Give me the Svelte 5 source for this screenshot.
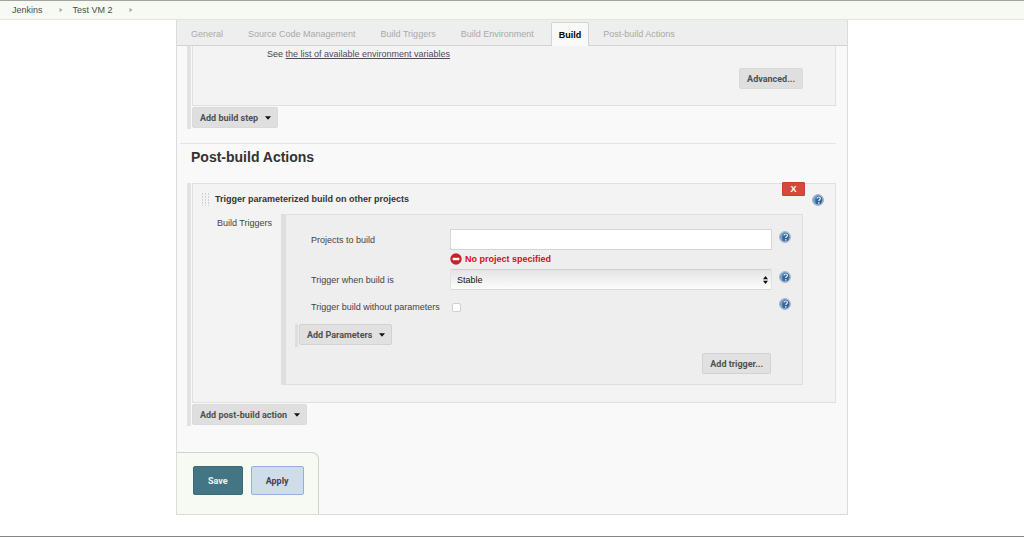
<script>
	let active = 'Build';
	let projects = '';
	let condition = 'Stable';
	let noParams = false;

	const crumbs = ['Jenkins', 'Test VM 2'];
	const tabs = [
		'General',
		'Source Code Management',
		'Build Triggers',
		'Build Environment',
		'Build',
		'Post-build Actions'
	];
	const conditions = ['Stable', 'Unstable', 'Failed', 'Complete'];
</script>

{#snippet help(topic)}
	<button type="button" class="help" aria-label="Help for {topic}">
		<svg viewBox="0 0 12 12" width="12" height="12" aria-hidden="true">
			<circle cx="6" cy="6" r="5.5" fill="#c3d0dc" stroke="#93a9bd" stroke-width="0.8" />
			<circle cx="6" cy="6" r="4.6" fill="#35659f" />
			<path d="M1.6 4.2Q2.6 1.6 5.4 1.5L3.4 4.3 3.2 7.5 4.4 10.2Q1 8.6 1.6 4.2Z" fill="#7ba6cf" />
			<path
				d="M5 4.5Q5 3 6.7 3T8.4 4.5Q8.4 5.4 7.4 5.9 6.8 6.2 6.8 7.1"
				fill="none"
				stroke="#e6eef6"
				stroke-width="1.2"
			/>
			<circle cx="6.8" cy="8.9" r="0.8" fill="#e6eef6" />
		</svg>
	</button>
{/snippet}

{#snippet caret()}
	<svg class="caret" viewBox="0 0 6 4" width="6" height="4" aria-hidden="true">
		<path d="M0 0.3H6L3 3.8Z" fill="#111" />
	</svg>
{/snippet}

<div class="page">
	<nav class="crumbs" aria-label="Breadcrumb">
		{#each crumbs as crumb}
			<a href="#top">{crumb}</a>
			<svg viewBox="0 0 4 6" width="4" height="6" aria-hidden="true">
				<path d="M0.5 0.8L3.5 3 0.5 5.2Z" fill="#aaa" />
			</svg>
		{/each}
	</nav>

	<main>
		<div class="tabs">
			{#each tabs as tab}
				<button type="button" class:active={tab === active} on:click={() => (active = tab)}>
					{tab}
				</button>
			{/each}
		</div>

		<form on:submit|preventDefault>
			<div class="group">
				<section class="step">
					<p>See <a href="#env">the list of available environment variables</a></p>
					<button type="button" class="btn">Advanced...</button>
				</section>
				<button type="button" class="btn add">Add build step {@render caret()}</button>
			</div>

			<h2>Post-build Actions</h2>

			<div class="group">
				<section class="action">
					<header>
						<svg class="grip" viewBox="0 0 9 13" width="9" height="13" aria-hidden="true">
							<path
								d="M1.5 0V13M4.5 0V13M7.5 0V13"
								fill="none"
								stroke="#d0d0d0"
								stroke-dasharray="2 1"
							/>
						</svg>
						<h3>Trigger parameterized build on other projects</h3>
						<button type="button" class="remove">X</button>
						{@render help('this action')}
					</header>

					<div class="body">
						<span class="name">Build Triggers</span>
						<div class="trigger">
							<div class="row">
								<label for="projects">Projects to build</label>
								<input id="projects" type="text" bind:value={projects} />
								{@render help('projects to build')}
							</div>
							<p class="error">
								<svg viewBox="0 0 12 12" width="12" height="12" aria-hidden="true">
									<circle cx="6" cy="6" r="5.7" fill="#c9202a" />
									<rect x="2.6" y="4.8" width="6.8" height="2.4" rx="0.6" fill="#fff" />
								</svg>
								No project specified
							</p>
							<div class="row">
								<label for="condition">Trigger when build is</label>
								<div class="select">
									<select id="condition" bind:value={condition}>
										{#each conditions as item}
											<option>{item}</option>
										{/each}
									</select>
									<svg viewBox="0 0 5 8" width="5" height="8" aria-hidden="true">
										<path d="M0 3.2L2.5 0 5 3.2ZM0 4.8H5L2.5 8Z" fill="#111" />
									</svg>
								</div>
								{@render help('trigger condition')}
							</div>
							<div class="row check">
								<label for="no-params">Trigger build without parameters</label>
								<div class="tick">
									<input id="no-params" type="checkbox" bind:checked={noParams} />
								</div>
								{@render help('building without parameters')}
							</div>
							<div class="params">
								<button type="button" class="btn">Add Parameters {@render caret()}</button>
							</div>
							<button type="button" class="btn more">Add trigger...</button>
						</div>
					</div>
				</section>
				<button type="button" class="btn add">Add post-build action {@render caret()}</button>
			</div>

			<footer>
				<button type="submit" class="save">Save</button>
				<button type="button" class="apply">Apply</button>
			</footer>
		</form>
	</main>
</div>

<style>
	:global(body) {
		background: #fff;
	}

	.page {
		box-sizing: border-box;
		min-height: 100vh;
		border-top: 1px solid #a2a49e;
		border-bottom: 1px solid #858585;
		font: 9px/12px 'Liberation Sans', Arial, sans-serif;
		color: #444;
	}

	button,
	input,
	select {
		box-sizing: border-box;
		margin: 0;
		font: inherit;
	}

	p,
	h2,
	h3 {
		margin: 0;
	}

	.crumbs {
		display: flex;
		align-items: center;
		height: 18px;
		padding-left: 12px;
		border-bottom: 1px solid #e3e6df;
		background: #f6faf2;
	}

	.crumbs a {
		color: #4c4c4c;
		text-decoration: none;
	}

	.crumbs svg {
		margin: 0 10px 0 16px;
	}

	main {
		margin: 0 176px;
		border: 1px solid #dcdcdc;
		border-top: 0;
		background: #f9f9f9;
	}

	.tabs {
		display: flex;
		align-items: flex-end;
		height: 25px;
		padding-left: 6px;
		border-bottom: 1px solid #d3d3d3;
		background: #eee;
	}

	.tabs button {
		height: 24px;
		padding: 0 7px;
		margin-right: 9px;
		border: 1px solid transparent;
		border-bottom: 0;
		background: none;
		color: #a9a9a9;
		white-space: nowrap;
	}

	.tabs button.active {
		margin: 0 6px -1px 0;
		border-color: #d3d3d3;
		border-radius: 2px 2px 0 0;
		background: #f9f9f9;
		color: #000;
		font-weight: bold;
	}

	.group {
		margin: 0 11px 0 10px;
		border-left: 4px solid #e2e2e2;
		padding: 0 0 1px 1px;
	}

	section {
		box-sizing: border-box;
		border: 1px solid #e0e0e0;
		background: #f3f3f3;
	}

	.step {
		display: flex;
		flex-direction: column;
		height: 60px;
		padding: 2px 32px 17px 74px;
		border-top: 0;
	}

	.step p {
		margin-bottom: 8px;
	}

	.step a {
		color: #55475c;
	}

	.step .btn {
		align-self: flex-end;
	}

	.btn {
		display: inline-flex;
		align-items: center;
		height: 21px;
		flex: none;
		padding: 0 7px;
		border: 1px solid #dadada;
		border-radius: 2px;
		background: #dfdfdf;
		color: #505050;
		font-family: Roboto, 'Liberation Sans', sans-serif;
		font-weight: bold;
		white-space: nowrap;
	}

	.caret {
		margin: 1px -1px 0 7px;
	}

	.add {
		display: flex;
		margin-top: 1px;
	}

	h2 {
		margin: 14px 11px 13px 3px;
		padding: 4px 0 4px 11px;
		border-top: 1px solid #e4e4e4;
		color: #333;
		font-size: 14px;
		line-height: 18px;
	}

	.action {
		padding-bottom: 17px;
	}

	header {
		display: flex;
		align-items: flex-start;
		height: 30px;
		padding: 0 11px 0 8px;
	}

	.grip {
		margin: 9px 5px 0 0;
	}

	h3 {
		flex: 1;
		margin-top: 9px;
		color: #333;
		font-size: 9px;
		line-height: 12px;
	}

	.remove {
		width: 23px;
		height: 14px;
		margin: -2px 7px 0 0;
		padding: 0;
		border: 1px solid #c8402f;
		border-radius: 1px;
		background: #d34a3c;
		color: #fff;
		font-weight: bold;
		line-height: 12px;
	}

	.help {
		display: block;
		flex: none;
		width: 12px;
		height: 12px;
		padding: 0;
		border: 0;
		background: none;
	}

	.help svg {
		display: block;
	}

	header .help {
		margin-top: 10px;
	}

	.body {
		display: flex;
		padding-right: 32px;
	}

	.name {
		flex: none;
		width: 64px;
		margin-top: 3px;
		padding-left: 24px;
	}

	.trigger {
		display: flex;
		flex: 1;
		flex-direction: column;
		box-sizing: border-box;
		border: 1px solid #dedede;
		border-left: 5px solid #dedede;
		padding: 14px 11px 10px 9px;
		background: #eee;
	}

	.row {
		display: grid;
		grid-template-columns: 132px 1fr 12px;
		align-items: center;
		column-gap: 7px;
		padding-left: 16px;
	}

	.row label {
		white-space: nowrap;
	}

	.row .help {
		margin-bottom: 6px;
	}

	input[type='text'] {
		width: 100%;
		height: 21px;
		padding: 0 6px;
		border: 1px solid #d6d6d6;
		background: #fff;
	}

	.error {
		display: flex;
		align-items: center;
		gap: 3px;
		margin: 3px 0 4px 155px;
		color: #d20f20;
		font-weight: bold;
	}

	.select {
		display: flex;
		align-items: center;
	}

	select {
		width: 100%;
		height: 21px;
		padding: 0 6px;
		border: 1px solid #dcdcdc;
		border-color: #cfcfcf #e2e2e2 #d8d8d8;
		border-radius: 2px;
		appearance: none;
		background: linear-gradient(#e4e4e4, #fdfdfd);
		color: #111;
	}

	.select svg {
		margin-left: -9px;
		pointer-events: none;
	}

	.check {
		margin-top: 8px;
	}

	.tick {
		display: flex;
		padding-left: 2px;
	}

	input[type='checkbox'] {
		width: 9px;
		height: 9px;
		border: 1px solid #d0d0d0;
		border-radius: 2px;
		appearance: none;
		background: #fff;
	}

	input[type='checkbox']:checked {
		background: #3e70aa;
	}

	.params {
		display: flex;
		margin-top: 8px;
		border-left: 3px solid #dedede;
		padding: 0 0 2px 1px;
	}

	.trigger .btn {
		border-color: #d2d2d2;
		background: #e1e1e1;
	}

	.more {
		align-self: flex-end;
		margin: 6px 20px 0 0;
	}

	footer {
		display: flex;
		gap: 8px;
		box-sizing: border-box;
		width: fit-content;
		height: 62px;
		margin-top: 26px;
		padding: 13px 14px 0 16px;
		border: 1px solid #ccd4c6;
		border-width: 1px 1px 0 0;
		border-radius: 0 7px 0 0;
		background: #f7faf3;
	}

	footer button {
		height: 29px;
		padding: 0 14px;
		border: 1px solid #3a6b7a;
		border-radius: 2px;
		background: #437585;
		color: #eef4f6;
		font-family: Roboto, 'Liberation Sans', sans-serif;
		font-weight: bold;
	}

	footer .apply {
		border-color: #8fb2dc;
		background: #cfdcea;
		color: #3d4652;
	}
</style>
